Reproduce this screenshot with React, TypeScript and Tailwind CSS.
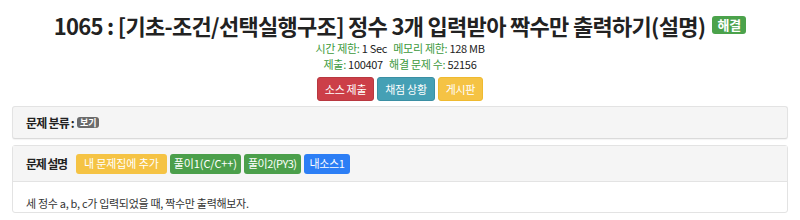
import React from 'react';

const font = { fontFamily: '"Noto Sans CJK KR", "Noto Sans", sans-serif' };

function Btn({ color, children }: { color: string; children: React.ReactNode }) {
  return (
    <span className={`inline-flex items-center justify-center rounded-[3px] text-[11px] text-white ${color}`}>
      {children}
    </span>
  );
}

export default function App() {
  return (
    <div className="w-[800px] h-[220px] overflow-hidden bg-white text-[#222]" style={font}>
      <div className="flex flex-col items-center pt-[10px]">
        <h1 className="flex items-center text-[22px] font-bold leading-[30px] tracking-[-0.7px]">
          1065 : [기초-조건/선택실행구조] 정수 3개 입력받아 짝수만 출력하기(설명)
          <span className="ml-[7px] rounded-[3px] bg-[#4ba24b] px-[5px] text-[13px] leading-[18px] text-white font-bold tracking-normal">
            해결
          </span>
        </h1>
        <div className="h-[16px] text-[11px] leading-[16px] tracking-[-0.3px]">
          <span className="text-[#3d9a3d]">시간 제한:</span> 1 Sec{' '}
          <span className="ml-1 text-[#3d9a3d]">메모리 제한:</span> 128 MB
        </div>
        <div className="h-[16px] text-[11px] leading-[16px] tracking-[-0.3px]">
          <span className="text-[#3d9a3d]">제출:</span> 100407{' '}
          <span className="ml-1 text-[#3d9a3d]">해결 문제 수:</span> 52156
        </div>
        <div className="mt-[5px] flex gap-[3px] h-[24px]">
          <Btn color="bg-[#cc3f48] border border-[#b83840] px-[7px] tracking-[-0.3px]">소스 제출</Btn>
          <Btn color="bg-[#45a0b5] border border-[#3b8fa3] px-[7px] tracking-[-0.3px]">채점 상황</Btn>
          <Btn color="bg-[#f5c344] border border-[#efba30] px-[7px] tracking-[-0.3px]">게시판</Btn>
        </div>
      </div>

      <div className="mx-[12px] mt-[5px] h-[33px] flex items-center rounded-[3px] border border-[#e3e3e3] border-b-[#dadada] bg-[#f5f5f5] px-[13px] shadow-[0_1px_1px_rgba(0,0,0,0.05)]">
        <span className="text-[12px] font-bold tracking-[-0.8px]">문제 분류 :</span>
        <span className="ml-[3px] rounded-[3px] bg-[#6b6b6b] px-[3px] text-[9px] leading-[11px] text-white font-bold">보기</span>
      </div>

      <div className="mx-[12px] mt-[6px] rounded-[3px] border border-[#e3e3e3] bg-white">
        <div className="flex h-[36px] items-center border-b border-[#e3e3e3] bg-[#f5f5f5] px-[13px]">
          <span className="mr-[9px] text-[12px] font-bold tracking-[-1.2px]">문제 설명</span>
          <span className="flex h-[20px] gap-[3px]">
            <Btn color="bg-[#f5c344] px-[8px] tracking-[-0.1px]">내 문제집에 추가</Btn>
            <Btn color="bg-[#4b9f4b] px-[4px] tracking-[-0.1px]">풀이1(C/C++)</Btn>
            <Btn color="bg-[#4b9f4b] px-[4px] tracking-[-0.5px]">풀이2(PY3)</Btn>
            <Btn color="bg-[#2c7ef5] px-[6px] tracking-[-0.4px]">내소스1</Btn>
          </span>
        </div>
        <div className="px-[13px] pt-[13px] text-[11px] tracking-[-0.3px] text-[#333]">
          세 정수 a, b, c가 입력되었을 때, 짝수만 출력해보자.
        </div>
      </div>
    </div>
  );
}
